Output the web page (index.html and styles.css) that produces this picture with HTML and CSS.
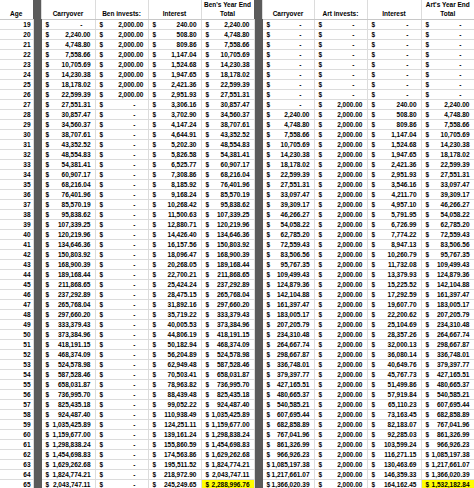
FILE: index.html
```html
<!DOCTYPE html>
<html>
<head>
<meta charset="utf-8">
<link rel="stylesheet" href="styles.css">
</head>
<body>
<table class="sheet">
<colgroup>
<col class="c-age"><col class="c-bar"><col class="c-54"><col class="c-53"><col class="c-53"><col class="c-53"><col class="c-bar"><col class="c-52"><col class="c-53"><col class="c-54"><col class="c-53">
</colgroup>
<thead>
<tr><th>Age</th><th class="b"></th><th>Carryover</th><th>Ben invests:</th><th>Interest</th><th>Ben's Year End<br>Total</th><th class="b"></th><th>Carryover</th><th>Art invests:</th><th>Interest</th><th>Art's Year End<br>Total</th></tr>
</thead>
<tbody>
<tr><td class="a">19</td><td class="b"></td><td class="z"><i>$</i>-</td><td><i>$</i>2,000.00</td><td><i>$</i>240.00</td><td><i>$</i>2,240.00</td><td class="b"></td><td class="z"><i>$</i>-</td><td class="z"><i>$</i>-</td><td class="z"><i>$</i>-</td><td class="z"><i>$</i>-</td></tr>
<tr><td class="a">20</td><td class="b"></td><td><i>$</i>2,240.00</td><td><i>$</i>2,000.00</td><td><i>$</i>508.80</td><td><i>$</i>4,748.80</td><td class="b"></td><td class="z"><i>$</i>-</td><td class="z"><i>$</i>-</td><td class="z"><i>$</i>-</td><td class="z"><i>$</i>-</td></tr>
<tr><td class="a">21</td><td class="b"></td><td><i>$</i>4,748.80</td><td><i>$</i>2,000.00</td><td><i>$</i>809.86</td><td><i>$</i>7,558.66</td><td class="b"></td><td class="z"><i>$</i>-</td><td class="z"><i>$</i>-</td><td class="z"><i>$</i>-</td><td class="z"><i>$</i>-</td></tr>
<tr><td class="a">22</td><td class="b"></td><td><i>$</i>7,558.66</td><td><i>$</i>2,000.00</td><td><i>$</i>1,147.04</td><td><i>$</i>10,705.69</td><td class="b"></td><td class="z"><i>$</i>-</td><td class="z"><i>$</i>-</td><td class="z"><i>$</i>-</td><td class="z"><i>$</i>-</td></tr>
<tr><td class="a">23</td><td class="b"></td><td><i>$</i>10,705.69</td><td><i>$</i>2,000.00</td><td><i>$</i>1,524.68</td><td><i>$</i>14,230.38</td><td class="b"></td><td class="z"><i>$</i>-</td><td class="z"><i>$</i>-</td><td class="z"><i>$</i>-</td><td class="z"><i>$</i>-</td></tr>
<tr><td class="a">24</td><td class="b"></td><td><i>$</i>14,230.38</td><td><i>$</i>2,000.00</td><td><i>$</i>1,947.65</td><td><i>$</i>18,178.02</td><td class="b"></td><td class="z"><i>$</i>-</td><td class="z"><i>$</i>-</td><td class="z"><i>$</i>-</td><td class="z"><i>$</i>-</td></tr>
<tr><td class="a">25</td><td class="b"></td><td><i>$</i>18,178.02</td><td><i>$</i>2,000.00</td><td><i>$</i>2,421.36</td><td><i>$</i>22,599.39</td><td class="b"></td><td class="z"><i>$</i>-</td><td class="z"><i>$</i>-</td><td class="z"><i>$</i>-</td><td class="z"><i>$</i>-</td></tr>
<tr><td class="a">26</td><td class="b"></td><td><i>$</i>22,599.39</td><td><i>$</i>2,000.00</td><td><i>$</i>2,951.93</td><td><i>$</i>27,551.31</td><td class="b"></td><td class="z"><i>$</i>-</td><td class="z"><i>$</i>-</td><td class="z"><i>$</i>-</td><td class="z"><i>$</i>-</td></tr>
<tr><td class="a">27</td><td class="b"></td><td><i>$</i>27,551.31</td><td class="z"><i>$</i>-</td><td><i>$</i>3,306.16</td><td><i>$</i>30,857.47</td><td class="b"></td><td class="z"><i>$</i>-</td><td><i>$</i>2,000.00</td><td><i>$</i>240.00</td><td><i>$</i>2,240.00</td></tr>
<tr><td class="a">28</td><td class="b"></td><td><i>$</i>30,857.47</td><td class="z"><i>$</i>-</td><td><i>$</i>3,702.90</td><td><i>$</i>34,560.37</td><td class="b"></td><td><i>$</i>2,240.00</td><td><i>$</i>2,000.00</td><td><i>$</i>508.80</td><td><i>$</i>4,748.80</td></tr>
<tr><td class="a">29</td><td class="b"></td><td><i>$</i>34,560.37</td><td class="z"><i>$</i>-</td><td><i>$</i>4,147.24</td><td><i>$</i>38,707.61</td><td class="b"></td><td><i>$</i>4,748.80</td><td><i>$</i>2,000.00</td><td><i>$</i>809.86</td><td><i>$</i>7,558.66</td></tr>
<tr><td class="a">30</td><td class="b"></td><td><i>$</i>38,707.61</td><td class="z"><i>$</i>-</td><td><i>$</i>4,644.91</td><td><i>$</i>43,352.52</td><td class="b"></td><td><i>$</i>7,558.66</td><td><i>$</i>2,000.00</td><td><i>$</i>1,147.04</td><td><i>$</i>10,705.69</td></tr>
<tr><td class="a">31</td><td class="b"></td><td><i>$</i>43,352.52</td><td class="z"><i>$</i>-</td><td><i>$</i>5,202.30</td><td><i>$</i>48,554.83</td><td class="b"></td><td><i>$</i>10,705.69</td><td><i>$</i>2,000.00</td><td><i>$</i>1,524.68</td><td><i>$</i>14,230.38</td></tr>
<tr><td class="a">32</td><td class="b"></td><td><i>$</i>48,554.83</td><td class="z"><i>$</i>-</td><td><i>$</i>5,826.58</td><td><i>$</i>54,381.41</td><td class="b"></td><td><i>$</i>14,230.38</td><td><i>$</i>2,000.00</td><td><i>$</i>1,947.65</td><td><i>$</i>18,178.02</td></tr>
<tr><td class="a">33</td><td class="b"></td><td><i>$</i>54,381.41</td><td class="z"><i>$</i>-</td><td><i>$</i>6,525.77</td><td><i>$</i>60,907.17</td><td class="b"></td><td><i>$</i>18,178.02</td><td><i>$</i>2,000.00</td><td><i>$</i>2,421.36</td><td><i>$</i>22,599.39</td></tr>
<tr><td class="a">34</td><td class="b"></td><td><i>$</i>60,907.17</td><td class="z"><i>$</i>-</td><td><i>$</i>7,308.86</td><td><i>$</i>68,216.04</td><td class="b"></td><td><i>$</i>22,599.39</td><td><i>$</i>2,000.00</td><td><i>$</i>2,951.93</td><td><i>$</i>27,551.31</td></tr>
<tr><td class="a">35</td><td class="b"></td><td><i>$</i>68,216.04</td><td class="z"><i>$</i>-</td><td><i>$</i>8,185.92</td><td><i>$</i>76,401.96</td><td class="b"></td><td><i>$</i>27,551.31</td><td><i>$</i>2,000.00</td><td><i>$</i>3,546.16</td><td><i>$</i>33,097.47</td></tr>
<tr><td class="a">36</td><td class="b"></td><td><i>$</i>76,401.96</td><td class="z"><i>$</i>-</td><td><i>$</i>9,168.24</td><td><i>$</i>85,570.19</td><td class="b"></td><td><i>$</i>33,097.47</td><td><i>$</i>2,000.00</td><td><i>$</i>4,211.70</td><td><i>$</i>39,309.17</td></tr>
<tr><td class="a">37</td><td class="b"></td><td><i>$</i>85,570.19</td><td class="z"><i>$</i>-</td><td><i>$</i>10,268.42</td><td><i>$</i>95,838.62</td><td class="b"></td><td><i>$</i>39,309.17</td><td><i>$</i>2,000.00</td><td><i>$</i>4,957.10</td><td><i>$</i>46,266.27</td></tr>
<tr><td class="a">38</td><td class="b"></td><td><i>$</i>95,838.62</td><td class="z"><i>$</i>-</td><td><i>$</i>11,500.63</td><td><i>$</i>107,339.25</td><td class="b"></td><td><i>$</i>46,266.27</td><td><i>$</i>2,000.00</td><td><i>$</i>5,791.95</td><td><i>$</i>54,058.22</td></tr>
<tr><td class="a">39</td><td class="b"></td><td><i>$</i>107,339.25</td><td class="z"><i>$</i>-</td><td><i>$</i>12,880.71</td><td><i>$</i>120,219.96</td><td class="b"></td><td><i>$</i>54,058.22</td><td><i>$</i>2,000.00</td><td><i>$</i>6,726.99</td><td><i>$</i>62,785.20</td></tr>
<tr><td class="a">40</td><td class="b"></td><td><i>$</i>120,219.96</td><td class="z"><i>$</i>-</td><td><i>$</i>14,426.40</td><td><i>$</i>134,646.36</td><td class="b"></td><td><i>$</i>62,785.20</td><td><i>$</i>2,000.00</td><td><i>$</i>7,774.22</td><td><i>$</i>72,559.43</td></tr>
<tr><td class="a">41</td><td class="b"></td><td><i>$</i>134,646.36</td><td class="z"><i>$</i>-</td><td><i>$</i>16,157.56</td><td><i>$</i>150,803.92</td><td class="b"></td><td><i>$</i>72,559.43</td><td><i>$</i>2,000.00</td><td><i>$</i>8,947.13</td><td><i>$</i>83,506.56</td></tr>
<tr><td class="a">42</td><td class="b"></td><td><i>$</i>150,803.92</td><td class="z"><i>$</i>-</td><td><i>$</i>18,096.47</td><td><i>$</i>168,900.39</td><td class="b"></td><td><i>$</i>83,506.56</td><td><i>$</i>2,000.00</td><td><i>$</i>10,260.79</td><td><i>$</i>95,767.35</td></tr>
<tr><td class="a">43</td><td class="b"></td><td><i>$</i>168,900.39</td><td class="z"><i>$</i>-</td><td><i>$</i>20,268.05</td><td><i>$</i>189,168.44</td><td class="b"></td><td><i>$</i>95,767.35</td><td><i>$</i>2,000.00</td><td><i>$</i>11,732.08</td><td><i>$</i>109,499.43</td></tr>
<tr><td class="a">44</td><td class="b"></td><td><i>$</i>189,168.44</td><td class="z"><i>$</i>-</td><td><i>$</i>22,700.21</td><td><i>$</i>211,868.65</td><td class="b"></td><td><i>$</i>109,499.43</td><td><i>$</i>2,000.00</td><td><i>$</i>13,379.93</td><td><i>$</i>124,879.36</td></tr>
<tr><td class="a">45</td><td class="b"></td><td><i>$</i>211,868.65</td><td class="z"><i>$</i>-</td><td><i>$</i>25,424.24</td><td><i>$</i>237,292.89</td><td class="b"></td><td><i>$</i>124,879.36</td><td><i>$</i>2,000.00</td><td><i>$</i>15,225.52</td><td><i>$</i>142,104.88</td></tr>
<tr><td class="a">46</td><td class="b"></td><td><i>$</i>237,292.89</td><td class="z"><i>$</i>-</td><td><i>$</i>28,475.15</td><td><i>$</i>265,768.04</td><td class="b"></td><td><i>$</i>142,104.88</td><td><i>$</i>2,000.00</td><td><i>$</i>17,292.59</td><td><i>$</i>161,397.47</td></tr>
<tr><td class="a">47</td><td class="b"></td><td><i>$</i>265,768.04</td><td class="z"><i>$</i>-</td><td><i>$</i>31,892.16</td><td><i>$</i>297,660.20</td><td class="b"></td><td><i>$</i>161,397.47</td><td><i>$</i>2,000.00</td><td><i>$</i>19,607.70</td><td><i>$</i>183,005.17</td></tr>
<tr><td class="a">48</td><td class="b"></td><td><i>$</i>297,660.20</td><td class="z"><i>$</i>-</td><td><i>$</i>35,719.22</td><td><i>$</i>333,379.43</td><td class="b"></td><td><i>$</i>183,005.17</td><td><i>$</i>2,000.00</td><td><i>$</i>22,200.62</td><td><i>$</i>207,205.79</td></tr>
<tr><td class="a">49</td><td class="b"></td><td><i>$</i>333,379.43</td><td class="z"><i>$</i>-</td><td><i>$</i>40,005.53</td><td><i>$</i>373,384.96</td><td class="b"></td><td><i>$</i>207,205.79</td><td><i>$</i>2,000.00</td><td><i>$</i>25,104.69</td><td><i>$</i>234,310.48</td></tr>
<tr><td class="a">50</td><td class="b"></td><td><i>$</i>373,384.96</td><td class="z"><i>$</i>-</td><td><i>$</i>44,806.19</td><td><i>$</i>418,191.15</td><td class="b"></td><td><i>$</i>234,310.48</td><td><i>$</i>2,000.00</td><td><i>$</i>28,357.26</td><td><i>$</i>264,667.74</td></tr>
<tr><td class="a">51</td><td class="b"></td><td><i>$</i>418,191.15</td><td class="z"><i>$</i>-</td><td><i>$</i>50,182.94</td><td><i>$</i>468,374.09</td><td class="b"></td><td><i>$</i>264,667.74</td><td><i>$</i>2,000.00</td><td><i>$</i>32,000.13</td><td><i>$</i>298,667.87</td></tr>
<tr><td class="a">52</td><td class="b"></td><td><i>$</i>468,374.09</td><td class="z"><i>$</i>-</td><td><i>$</i>56,204.89</td><td><i>$</i>524,578.98</td><td class="b"></td><td><i>$</i>298,667.87</td><td><i>$</i>2,000.00</td><td><i>$</i>36,080.14</td><td><i>$</i>336,748.01</td></tr>
<tr><td class="a">53</td><td class="b"></td><td><i>$</i>524,578.98</td><td class="z"><i>$</i>-</td><td><i>$</i>62,949.48</td><td><i>$</i>587,528.46</td><td class="b"></td><td><i>$</i>336,748.01</td><td><i>$</i>2,000.00</td><td><i>$</i>40,649.76</td><td><i>$</i>379,397.77</td></tr>
<tr><td class="a">54</td><td class="b"></td><td><i>$</i>587,528.46</td><td class="z"><i>$</i>-</td><td><i>$</i>70,503.41</td><td><i>$</i>658,031.87</td><td class="b"></td><td><i>$</i>379,397.77</td><td><i>$</i>2,000.00</td><td><i>$</i>45,767.73</td><td><i>$</i>427,165.51</td></tr>
<tr><td class="a">55</td><td class="b"></td><td><i>$</i>658,031.87</td><td class="z"><i>$</i>-</td><td><i>$</i>78,963.82</td><td><i>$</i>736,995.70</td><td class="b"></td><td><i>$</i>427,165.51</td><td><i>$</i>2,000.00</td><td><i>$</i>51,499.86</td><td><i>$</i>480,665.37</td></tr>
<tr><td class="a">56</td><td class="b"></td><td><i>$</i>736,995.70</td><td class="z"><i>$</i>-</td><td><i>$</i>88,439.48</td><td><i>$</i>825,435.18</td><td class="b"></td><td><i>$</i>480,665.37</td><td><i>$</i>2,000.00</td><td><i>$</i>57,919.84</td><td><i>$</i>540,585.21</td></tr>
<tr><td class="a">57</td><td class="b"></td><td><i>$</i>825,435.18</td><td class="z"><i>$</i>-</td><td><i>$</i>99,052.22</td><td><i>$</i>924,487.40</td><td class="b"></td><td><i>$</i>540,585.21</td><td><i>$</i>2,000.00</td><td><i>$</i>65,110.23</td><td><i>$</i>607,695.44</td></tr>
<tr><td class="a">58</td><td class="b"></td><td><i>$</i>924,487.40</td><td class="z"><i>$</i>-</td><td><i>$</i>110,938.49</td><td><i>$</i>1,035,425.89</td><td class="b"></td><td><i>$</i>607,695.44</td><td><i>$</i>2,000.00</td><td><i>$</i>73,163.45</td><td><i>$</i>682,858.89</td></tr>
<tr><td class="a">59</td><td class="b"></td><td><i>$</i>1,035,425.89</td><td class="z"><i>$</i>-</td><td><i>$</i>124,251.11</td><td><i>$</i>1,159,677.00</td><td class="b"></td><td><i>$</i>682,858.89</td><td><i>$</i>2,000.00</td><td><i>$</i>82,183.07</td><td><i>$</i>767,041.96</td></tr>
<tr><td class="a">60</td><td class="b"></td><td><i>$</i>1,159,677.00</td><td class="z"><i>$</i>-</td><td><i>$</i>139,161.24</td><td><i>$</i>1,298,838.24</td><td class="b"></td><td><i>$</i>767,041.96</td><td><i>$</i>2,000.00</td><td><i>$</i>92,285.03</td><td><i>$</i>861,326.99</td></tr>
<tr><td class="a">61</td><td class="b"></td><td><i>$</i>1,298,838.24</td><td class="z"><i>$</i>-</td><td><i>$</i>155,860.59</td><td><i>$</i>1,454,698.83</td><td class="b"></td><td><i>$</i>861,326.99</td><td><i>$</i>2,000.00</td><td><i>$</i>103,599.24</td><td><i>$</i>966,926.23</td></tr>
<tr><td class="a">62</td><td class="b"></td><td><i>$</i>1,454,698.83</td><td class="z"><i>$</i>-</td><td><i>$</i>174,563.86</td><td><i>$</i>1,629,262.68</td><td class="b"></td><td><i>$</i>966,926.23</td><td><i>$</i>2,000.00</td><td><i>$</i>116,271.15</td><td><i>$</i>1,085,197.38</td></tr>
<tr><td class="a">63</td><td class="b"></td><td><i>$</i>1,629,262.68</td><td class="z"><i>$</i>-</td><td><i>$</i>195,511.52</td><td><i>$</i>1,824,774.21</td><td class="b"></td><td><i>$</i>1,085,197.38</td><td><i>$</i>2,000.00</td><td><i>$</i>130,463.69</td><td><i>$</i>1,217,661.07</td></tr>
<tr><td class="a">64</td><td class="b"></td><td><i>$</i>1,824,774.21</td><td class="z"><i>$</i>-</td><td><i>$</i>218,972.90</td><td><i>$</i>2,043,747.11</td><td class="b"></td><td><i>$</i>1,217,661.07</td><td><i>$</i>2,000.00</td><td><i>$</i>146,359.33</td><td><i>$</i>1,366,020.39</td></tr>
<tr><td class="a">65</td><td class="b"></td><td><i>$</i>2,043,747.11</td><td class="z"><i>$</i>-</td><td><i>$</i>245,249.65</td><td class="y"><i>$</i>2,288,996.76</td><td class="b"></td><td><i>$</i>1,366,020.39</td><td><i>$</i>2,000.00</td><td><i>$</i>164,162.45</td><td class="y"><i>$</i>1,532,182.84</td></tr>
</tbody>
</table>
</body>
</html>
```

FILE: styles.css
```css
html, body {
  margin: 0;
  padding: 0;
  background: #ffffff;
}

.sheet {
  table-layout: fixed;
  border-collapse: collapse;
  width: 474px;
  font-family: "Liberation Sans", Arial, sans-serif;
  font-size: 6.5px;
  font-weight: bold;
  color: #000000;
}

.c-age { width: 33px; }
.c-bar { width: 8px; }
.c-52 { width: 52px; }
.c-53 { width: 53px; }
.c-54 { width: 54px; }

.sheet th {
  height: 18px;
  padding: 0 1px 1px;
  line-height: 9px;
  vertical-align: bottom;
  text-align: center;
  white-space: nowrap;
  border-left: 1px solid #dcdcdc;
  border-bottom: 1px solid #c8c8c8;
  font-weight: bold;
}

.sheet thead th:first-child {
  border-left: none;
}

.sheet td {
  height: 9px;
  padding: 0 4px 0 4px;
  line-height: 9px;
  text-align: right;
  white-space: nowrap;
  overflow: hidden;
  border: 1px solid #dcdcdc;
  border-top: none;
}

.sheet td i {
  float: left;
  font-style: normal;
}

.sheet td.a {
  padding-right: 2px;
  border-left: none;
}

.sheet td.z {
  padding-right: 12px;
}

.sheet .b {
  background: #5b5b5b;
  border-color: #5b5b5b;
  padding: 0;
}

.sheet td.y {
  background: #ffff00;
}
```
